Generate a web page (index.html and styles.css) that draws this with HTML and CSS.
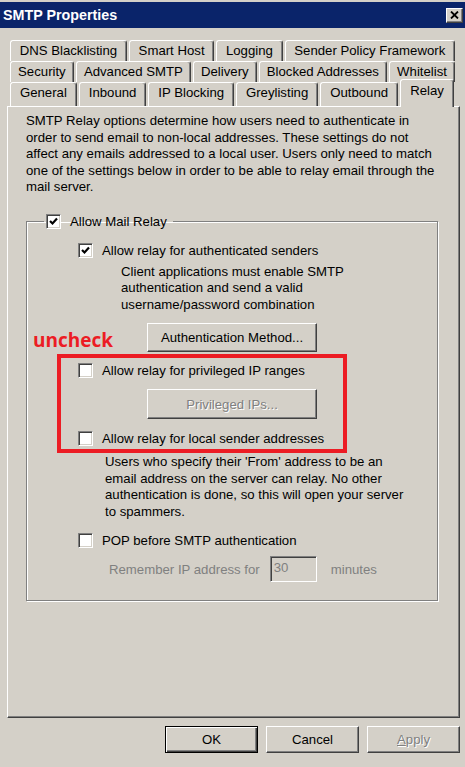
FILE: index.html
```html
<!DOCTYPE html>
<html lang="en">
<head>
    <meta charset="UTF-8">
    <title>SMTP Properties</title>
    <link rel="stylesheet" href="styles.css">
</head>
<body>
    <div class="window">
        <div class="titlebar">
            <span class="title">SMTP Properties</span>
            <span class="close-btn">
                <svg width="9" height="8" viewBox="0 0 9 8"><path d="M1 0.5 L8 7.5 M8 0.5 L1 7.5" stroke="#000" stroke-width="1.8"/></svg>
            </span>
        </div>

        <div class="tabs">
            <div class="tab-row">
                <div class="tab">DNS Blacklisting</div>
                <div class="tab">Smart Host</div>
                <div class="tab">Logging</div>
                <div class="tab">Sender Policy Framework</div>
            </div>
            <div class="tab-row">
                <div class="tab">Security</div>
                <div class="tab">Advanced SMTP</div>
                <div class="tab">Delivery</div>
                <div class="tab">Blocked Addresses</div>
                <div class="tab">Whitelist</div>
            </div>
            <div class="tab-row front">
                <div class="tab">General</div>
                <div class="tab">Inbound</div>
                <div class="tab">IP Blocking</div>
                <div class="tab">Greylisting</div>
                <div class="tab">Outbound</div>
                <div class="tab selected">Relay</div>
            </div>
        </div>

        <div class="panel">
            <p class="intro">SMTP Relay options determine how users need to authenticate in order to send email to non-local addresses. These settings do not affect any emails addressed to a local user. Users only need to match one of the settings below in order to be able to relay email through the mail server.</p>

            <fieldset class="group">
                <legend class="group-title">
                    <span class="check checked"><svg width="9" height="9" viewBox="0 0 9 9"><path d="M1 4 L3.5 6.5 L8 1.5" fill="none" stroke="#000" stroke-width="2.2"/></svg></span>
                    Allow Mail Relay
                </legend>

                <div class="group-body">
                    <label class="option">
                        <span class="check checked"><svg width="9" height="9" viewBox="0 0 9 9"><path d="M1 4 L3.5 6.5 L8 1.5" fill="none" stroke="#000" stroke-width="2.2"/></svg></span>
                        Allow relay for authenticated senders
                    </label>
                    <p class="note note-auth">Client applications must enable SMTP authentication and send a valid username/password combination</p>

                    <div class="button-line">
                        <span class="uncheck">uncheck</span>
                        <button class="btn wide">Authentication Method...</button>
                    </div>

                    <div class="highlight">
                        <label class="option">
                            <span class="check"></span>
                            Allow relay for privileged IP ranges
                        </label>
                        <div class="button-line">
                            <button class="btn wide disabled">Privileged IPs...</button>
                        </div>
                        <label class="option">
                            <span class="check"></span>
                            Allow relay for local sender addresses
                        </label>
                    </div>
                    <p class="note note-local">Users who specify their 'From' address to be an email address on the server can relay. No other authentication is done, so this will open your server to spammers.</p>

                    <label class="option pop">
                        <span class="check"></span>
                        POP before SMTP authentication
                    </label>
                    <div class="remember">
                        <span class="muted">Remember IP address for</span>
                        <span class="field">30</span>
                        <span class="muted">minutes</span>
                    </div>
                </div>
            </fieldset>
        </div>

        <div class="actions">
            <button class="btn default">OK</button>
            <button class="btn">Cancel</button>
            <button class="btn disabled"><u>A</u>pply</button>
        </div>
    </div>
</body>
</html>
```

FILE: styles.css
```css
*, *::before, *::after {
    box-sizing: border-box;
}

body {
    margin: 0;
    background: #d4d0c8;
    font-family: "Liberation Sans", Arial, sans-serif;
    font-size: 13.2px;
    color: #000;
}

.window {
    width: 465px;
    height: 767px;
    padding-top: 2px;
    background: #d4d0c8;
}

/* caption bar */
.titlebar {
    height: 26px;
    background: #0a246a;
    display: flex;
    align-items: center;
    justify-content: space-between;
    padding: 0 2px 0 3px;
}

.title {
    color: #fff;
    font-weight: bold;
    font-size: 14.3px;
}

.close-btn {
    width: 17px;
    height: 15px;
    display: flex;
    align-items: center;
    justify-content: center;
    background: #d4d0c8;
    border: 1px solid;
    border-color: #fff #404040 #404040 #fff;
    box-shadow: inset -1px -1px #808080;
}

/* tab strip, three rows */
.tabs {
    margin: 12px 0 0 10px;
    width: 445px;
}

.tab-row {
    display: flex;
    height: 21px;
    gap: 2px;
}

.tab-row.front {
    height: 24px;
    width: 442px;
}

.tab {
    flex: 1 1 auto;
    text-align: center;
    line-height: 19px;
    white-space: nowrap;
    background: #d4d0c8;
    border: 1px solid;
    border-color: #fff #404040 transparent #fff;
    border-bottom: none;
    border-radius: 3px 3px 0 0;
    box-shadow: inset -1px 0 #808080;
}

.tab.selected {
    flex: 0 0 54px;
    margin: -3px -2px -1px 0;
    line-height: 22px;
    position: relative;
    z-index: 1;
}

/* page of the Relay tab */
.panel {
    margin-left: 7px;
    width: 453px;
    height: 612px;
    padding: 6px 18px 0 18px;
    border: 1px solid;
    border-color: #fff #404040 #404040 #fff;
    box-shadow: inset -1px -1px #808080;
}

.intro {
    margin: 0;
    line-height: 16.5px;
    padding-right: 4px;
}

.group {
    margin: 18px 0 0 0;
    padding: 0;
    width: 412px;
    border: 1px solid #808080;
    box-shadow: 1px 1px 0 #fff, inset 1px 1px 0 #fff;
}

.group-title {
    margin-left: 17px;
    padding: 0 6px 0 2px;
    display: flex;
    align-items: center;
    gap: 9px;
    line-height: 16px;
}

.group-body {
    padding: 13px 0 18px 51px;
}

.check {
    flex: none;
    width: 15px;
    height: 15px;
    display: inline-flex;
    align-items: center;
    justify-content: center;
    background: #fff;
    border: 1px solid;
    border-color: #808080 #fff #fff #808080;
    box-shadow: inset 1px 1px #404040, inset -1px -1px #d4d0c8;
}

.option {
    display: flex;
    align-items: center;
    gap: 9px;
    height: 16px;
}

.note {
    margin: 0;
    line-height: 16.5px;
}

.note-auth {
    margin: 5px 0 0 43px;
    width: 235px;
}

.note-local {
    margin: 8px 0 0 27px;
    width: 310px;
}

.button-line {
    display: flex;
    align-items: center;
    margin-top: 10px;
}

.highlight .button-line {
    margin: 11px 0 11px 0;
    padding-left: 69px;
}

.uncheck {
    width: 114px;
    margin-left: -45px;
    color: #ec1c24;
    font-family: "Open Sans", "Liberation Sans", sans-serif;
    font-weight: bold;
    font-size: 19px;
    line-height: 20px;
    margin-top: 4px;
}

/* red marker round the two relay options */
.highlight {
    position: relative;
    margin-top: 10px;
}

.highlight::after {
    content: "";
    position: absolute;
    left: -21px;
    top: -8px;
    width: 290px;
    bottom: -7px;
    border: 4px solid #ec1c24;
}

.btn {
    font-family: inherit;
    font-size: 13.2px;
    color: #000;
    background: #d4d0c8;
    height: 28px;
    padding: 0;
    border: 1px solid;
    border-color: #fff #404040 #404040 #fff;
    box-shadow: inset -1px -1px #808080;
}

.btn.wide {
    width: 170px;
    height: 29px;
}

.highlight .btn.wide {
    height: 30px;
}

.btn.disabled {
    color: #808080;
    text-shadow: 1px 1px 0 #fff;
}

.btn.default {
    border: 1px solid #000;
    box-shadow: inset 1px 1px #fff, inset -1px -1px #404040, inset -2px -2px #808080;
}

.pop {
    margin-top: 12px;
}

.remember {
    display: flex;
    align-items: center;
    margin: 8px 0 0 31px;
    height: 26px;
}

.muted {
    color: #808080;
}

.field {
    width: 47px;
    height: 26px;
    margin: 0 14px 0 10px;
    padding: 3px 0 0 3px;
    color: #808080;
    background: #d4d0c8;
    border: 1px solid;
    border-color: #808080 #fff #fff #808080;
    box-shadow: inset 1px 1px #404040;
}

/* OK / Cancel / Apply */
.actions {
    display: flex;
    justify-content: flex-end;
    gap: 8px;
    margin-top: 8px;
    padding-right: 5px;
}

.actions .btn {
    width: 93px;
    height: 27px;
}
```
